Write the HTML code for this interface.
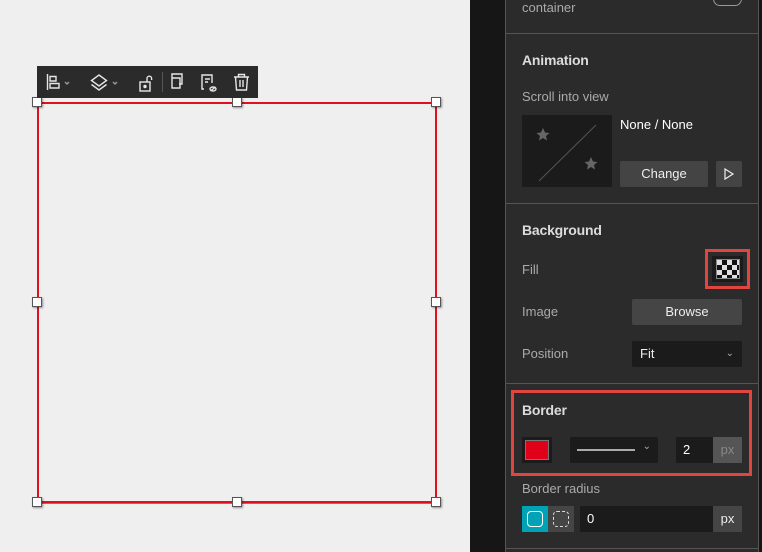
<!DOCTYPE html>
<html><head><style>
*{margin:0;padding:0;box-sizing:border-box}
body{width:762px;height:552px;overflow:hidden;background:#efefef;font-family:"Liberation Sans",sans-serif;position:relative}
.a{position:absolute}
.h{position:absolute;width:10px;height:10px;background:#fff;border:1px solid #555;box-shadow:1px 1px 2px rgba(0,0,0,.4)}
.t{position:absolute;color:#aaa;font-size:13px}
.hd{position:absolute;color:#dcdcdc;font-size:14px;font-weight:bold;letter-spacing:-0.2px}
.ln{position:absolute;left:505px;width:253px;height:1px;background:#555}
</style></head><body>
<div class="a" style="left:37px;top:102px;width:400px;height:401px;border:2px solid #e0101e;box-shadow:0 1px 0 #1aa"></div>
<div class="h" style="left:32px;top:97px"></div><div class="h" style="left:232px;top:97px"></div><div class="h" style="left:431px;top:97px"></div>
<div class="h" style="left:32px;top:297px"></div><div class="h" style="left:431px;top:297px"></div>
<div class="h" style="left:32px;top:497px"></div><div class="h" style="left:232px;top:497px"></div><div class="h" style="left:431px;top:497px"></div>
<div class="a" style="left:37px;top:66px;width:221px;height:32px;background:#2b2b2b">
<svg width="221" height="32" fill="none" stroke="#e6e6e6" stroke-width="1.4">
<path d="M10.5 8v16M13 10.5h6v4.5h-6zM13 17.5h9v4.5h-9z"/><path d="M28 16l2 2 2-2" stroke="#999"/>
<path d="M62 9l7.5 5.5-7.5 5.5-7.5-5.5zM54.5 18.5l7.5 5.5 7.5-5.5"/><path d="M76 16l2 2 2-2" stroke="#999"/>
<rect x="103" y="16" width="10" height="9"/><path d="M110 16v-3.5a2.3 2.3 0 0 1 4.6 0v1.5"/><circle cx="108" cy="20.5" r="1" fill="#e6e6e6"/>
<path d="M125.5 6v20" stroke="#555" stroke-width="1"/>
<path d="M135 12v-4h10v10h-3M135 12h8v10h-8z"/>
<path d="M167 23h-2v-14h10v8M168 13h5M168 16h3"/><ellipse cx="176" cy="23" rx="3" ry="2"/><path d="M173.5 25l5-4"/>
<path d="M197 11h15M201.5 11v-2.5h6v2.5M198.5 11l1 13h10l1-13M203 14v7M206 14v7"/>
</svg></div>
<div class="a" style="left:470px;top:0;width:35px;height:552px;background:#161616"></div>
<div class="a" style="left:505px;top:0;width:253px;height:552px;background:#2b2b2b;border-left:1px solid #555"></div>
<div class="a" style="left:758px;top:0;width:4px;height:552px;background:#161616;border-left:1px solid #555"></div>
<div class="a" style="left:713px;top:-8px;width:29px;height:14px;border:1.5px solid #999;border-radius:8px"></div>
<div class="t" style="left:522px;top:0px">container</div>
<div class="ln" style="top:33px"></div>
<div class="hd" style="left:522px;top:52px">Animation</div>
<div class="t" style="left:522px;top:89px">Scroll into view</div>
<div class="a" style="left:522px;top:115px;width:90px;height:72px;background:#1b1b1b">
<svg width="90" height="72"><path d="M17 66L74 10" stroke="#555"/>
<path d="M21 13l2 4.5 4.5.5-3.5 3 1 4.5-4-2.5-4 2.5 1-4.5-3.5-3 4.5-.5z" fill="#666"/>
<path d="M69 42l2 4.5 4.5.5-3.5 3 1 4.5-4-2.5-4 2.5 1-4.5-3.5-3 4.5-.5z" fill="#666"/></svg></div>
<div class="a" style="left:620px;top:117px;color:#fff;font-size:13px">None / None</div>
<div class="a" style="left:620px;top:161px;width:88px;height:26px;background:#444;border-radius:2px;color:#eee;font-size:13px;text-align:center;line-height:26px">Change</div>
<div class="a" style="left:716px;top:161px;width:26px;height:26px;background:#444;border-radius:2px"><svg width="26" height="26"><path d="M9 8l8 5-8 5z" fill="none" stroke="#eee" stroke-width="1.2"/></svg></div>
<div class="ln" style="top:203px"></div>
<div class="hd" style="left:522px;top:222px">Background</div>
<div class="t" style="left:522px;top:262px">Fill</div>
<div class="a" style="left:705px;top:249px;width:45px;height:40px;border:3px solid #e0463f"></div>
<div class="a" style="left:712px;top:256px;width:31px;height:26px;background:#1b1b1b;padding:3px 4px">
<div style="width:24px;height:20px;border:1px solid #888;background:repeating-conic-gradient(#111 0 25%,#e0e0e0 0 50%) 0 0/10px 10px"></div></div>
<div class="t" style="left:522px;top:304px">Image</div>
<div class="a" style="left:632px;top:299px;width:110px;height:26px;background:#454545;border-radius:2px;color:#eee;font-size:13px;text-align:center;line-height:26px">Browse</div>
<div class="t" style="left:522px;top:346px">Position</div>
<div class="a" style="left:632px;top:341px;width:110px;height:26px;background:#1b1b1b;border-radius:2px;color:#eee;font-size:13px;line-height:26px;padding-left:8px">Fit<span style="position:absolute;right:8px;color:#aaa;font-size:10px">&#8964;</span></div>
<div class="ln" style="top:383px"></div>
<div class="a" style="left:511px;top:390px;width:241px;height:86px;border:3px solid #e0463f"></div>
<div class="hd" style="left:522px;top:402px">Border</div>
<div class="a" style="left:522px;top:437px;width:30px;height:26px;background:#1b1b1b;padding:3px"><div style="width:24px;height:20px;background:#e0001a;border:1px solid #777"></div></div>
<div class="a" style="left:570px;top:437px;width:88px;height:26px;background:#1b1b1b;border-radius:2px"><div style="position:absolute;left:7px;top:12px;width:58px;height:2px;background:#aaa"></div><span style="position:absolute;right:7px;top:4px;color:#aaa;font-size:10px">&#8964;</span></div>
<div class="a" style="left:676px;top:437px;width:37px;height:26px;background:#1b1b1b;color:#fff;font-size:13px;line-height:26px;padding-left:7px">2</div>
<div class="a" style="left:713px;top:437px;width:29px;height:26px;background:#555;color:#888;font-size:13px;line-height:26px;text-align:center">px</div>
<div class="t" style="left:522px;top:481px">Border radius</div>
<div class="a" style="left:522px;top:506px;width:26px;height:26px;background:#00a3b5"><div style="position:absolute;left:5px;top:5px;width:16px;height:16px;border:1.5px solid #fff;border-radius:4px"></div></div>
<div class="a" style="left:548px;top:506px;width:26px;height:26px;background:#454545"><div style="position:absolute;left:5px;top:5px;width:16px;height:16px;border:1.5px dashed #ddd;border-radius:4px"></div></div>
<div class="a" style="left:580px;top:506px;width:133px;height:26px;background:#1b1b1b;color:#fff;font-size:13px;line-height:26px;padding-left:7px">0</div>
<div class="a" style="left:713px;top:506px;width:29px;height:26px;background:#454545;color:#eee;font-size:13px;line-height:26px;text-align:center">px</div>
<div class="ln" style="top:548px"></div>
</body></html>
